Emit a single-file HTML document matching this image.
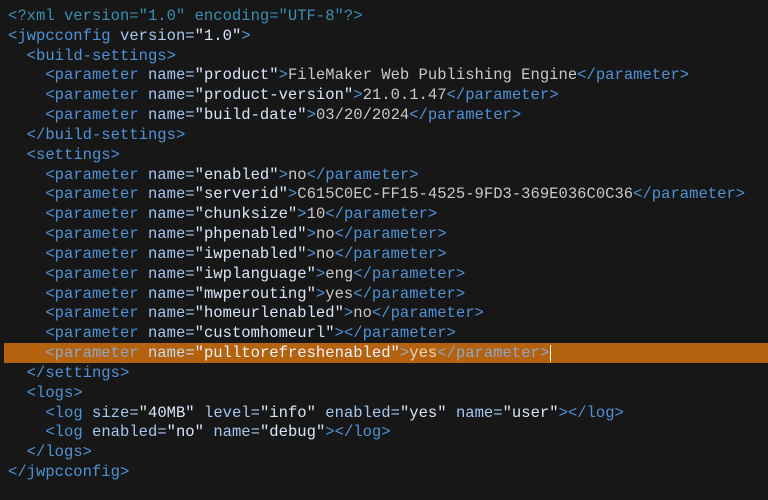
<!DOCTYPE html>
<html><head><meta charset="utf-8"><style>
html,body{margin:0;padding:0;background:#171717;}
body{width:768px;height:500px;overflow:hidden;position:relative;}
pre{margin:0;position:absolute;left:8px;top:7px;font-family:"Liberation Mono",monospace;font-size:15.55px;line-height:19.83px;color:#d6d6d6;}
.t{color:#4f92d6}.a{color:#a4c8f0}.s{color:#d8e6f8}.p{color:#3b8fb3}.x{color:#c8c8c8}
.hl{position:absolute;left:4px;top:343px;width:764px;height:20px;background:#b5620f;}
.cur{position:absolute;left:550px;top:345px;width:1px;height:17px;background:#fff;}
</style></head><body>
<div class="hl"></div><div class="cur"></div>
<pre><span class="p">&lt;?xml version="1.0" encoding="UTF-8"?&gt;</span>
<span class="t">&lt;jwpcconfig</span> <span class="a">version=</span><span class="s">"1.0"</span><span class="t">&gt;</span>
  <span class="t">&lt;build-settings&gt;</span>
    <span class="t">&lt;parameter</span> <span class="a">name=</span><span class="s">"product"</span><span class="t">&gt;</span><span class="x">FileMaker Web Publishing Engine</span><span class="t">&lt;/parameter&gt;</span>
    <span class="t">&lt;parameter</span> <span class="a">name=</span><span class="s">"product-version"</span><span class="t">&gt;</span><span class="x">21.0.1.47</span><span class="t">&lt;/parameter&gt;</span>
    <span class="t">&lt;parameter</span> <span class="a">name=</span><span class="s">"build-date"</span><span class="t">&gt;</span><span class="x">03/20/2024</span><span class="t">&lt;/parameter&gt;</span>
  <span class="t">&lt;/build-settings&gt;</span>
  <span class="t">&lt;settings&gt;</span>
    <span class="t">&lt;parameter</span> <span class="a">name=</span><span class="s">"enabled"</span><span class="t">&gt;</span><span class="x">no</span><span class="t">&lt;/parameter&gt;</span>
    <span class="t">&lt;parameter</span> <span class="a">name=</span><span class="s">"serverid"</span><span class="t">&gt;</span><span class="x">C615C0EC-FF15-4525-9FD3-369E036C0C36</span><span class="t">&lt;/parameter&gt;</span>
    <span class="t">&lt;parameter</span> <span class="a">name=</span><span class="s">"chunksize"</span><span class="t">&gt;</span><span class="x">10</span><span class="t">&lt;/parameter&gt;</span>
    <span class="t">&lt;parameter</span> <span class="a">name=</span><span class="s">"phpenabled"</span><span class="t">&gt;</span><span class="x">no</span><span class="t">&lt;/parameter&gt;</span>
    <span class="t">&lt;parameter</span> <span class="a">name=</span><span class="s">"iwpenabled"</span><span class="t">&gt;</span><span class="x">no</span><span class="t">&lt;/parameter&gt;</span>
    <span class="t">&lt;parameter</span> <span class="a">name=</span><span class="s">"iwplanguage"</span><span class="t">&gt;</span><span class="x">eng</span><span class="t">&lt;/parameter&gt;</span>
    <span class="t">&lt;parameter</span> <span class="a">name=</span><span class="s">"mwperouting"</span><span class="t">&gt;</span><span class="x">yes</span><span class="t">&lt;/parameter&gt;</span>
    <span class="t">&lt;parameter</span> <span class="a">name=</span><span class="s">"homeurlenabled"</span><span class="t">&gt;</span><span class="x">no</span><span class="t">&lt;/parameter&gt;</span>
    <span class="t">&lt;parameter</span> <span class="a">name=</span><span class="s">"customhomeurl"</span><span class="t">&gt;&lt;/parameter&gt;</span>
    <span style="color:#8fa6c8">&lt;parameter</span> <span style="color:#c8d8ec">name=</span><span style="color:#eef3fa">"pulltorefreshenabled"</span><span style="color:#8fa6c8">&gt;</span><span style="color:#e8d8c0">yes</span><span style="color:#8fa6c8">&lt;/parameter&gt;</span>
  <span class="t">&lt;/settings&gt;</span>
  <span class="t">&lt;logs&gt;</span>
    <span class="t">&lt;log</span> <span class="a">size=</span><span class="s">"40MB"</span> <span class="a">level=</span><span class="s">"info"</span> <span class="a">enabled=</span><span class="s">"yes"</span> <span class="a">name=</span><span class="s">"user"</span><span class="t">&gt;&lt;/log&gt;</span>
    <span class="t">&lt;log</span> <span class="a">enabled=</span><span class="s">"no"</span> <span class="a">name=</span><span class="s">"debug"</span><span class="t">&gt;&lt;/log&gt;</span>
  <span class="t">&lt;/logs&gt;</span>
<span class="t">&lt;/jwpcconfig&gt;</span></pre>
</body></html>
